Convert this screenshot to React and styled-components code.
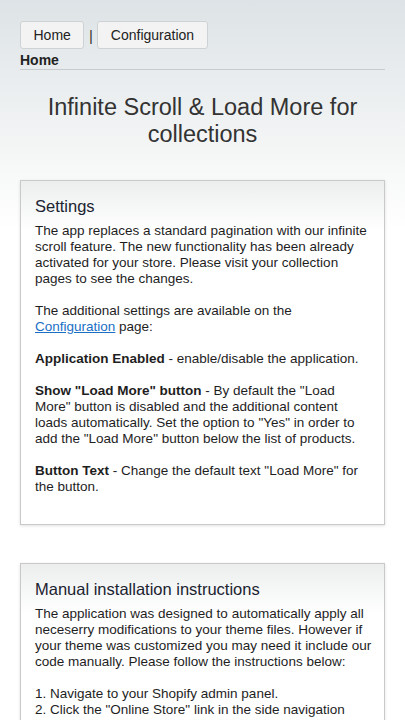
import React from 'react';
import { createGlobalStyle, styled } from 'styled-components';

const GlobalStyle = createGlobalStyle`
  html, body {
    margin: 0;
    padding: 0;
  }
  body {
    min-height: 720px;
    background: linear-gradient(to bottom, #dde3e6 0px, #f7f8f8 170px, #ffffff 230px);
    background-repeat: no-repeat;
    background-color: #fff;
    font-family: "Liberation Sans", Arial, sans-serif;
    color: #1e1e1e;
  }
`;

const App = () => {
  return (
    <>
      <GlobalStyle />
      <Page>
        <Nav>
          <NavButton>Home</NavButton>
          <Separator>|</Separator>
          <NavButton>Configuration</NavButton>
        </Nav>
        <Crumb>Home</Crumb>
        <Title>Infinite Scroll &amp; Load More for collections</Title>

        <Card $top={32}>
          <CardTitle>Settings</CardTitle>
          <Text>
            The app replaces a standard pagination with our infinite scroll
            feature. The new functionality has been already activated for your
            store. Please visit your collection pages to see the changes.
          </Text>
          <Text>
            The additional settings are available on the{' '}
            <Link href="#">Configuration</Link> page:
          </Text>
          <Text>
            <b>Application Enabled</b> - enable/disable the application.
          </Text>
          <Text>
            <b>Show "Load More" button</b> - By default the "Load More" button
            is disabled and the additional content loads automatically. Set the
            option to "Yes" in order to add the "Load More" button below the
            list of products.
          </Text>
          <Text>
            <b>Button Text</b> - Change the default text "Load More" for the
            button.
          </Text>
        </Card>

        <Card $top={38}>
          <CardTitle>Manual installation instructions</CardTitle>
          <Text>
            The application was designed to automatically apply all neceserry
            modifications to your theme files. However if your theme was
            customized you may need it include our code manually. Please follow
            the instructions below:
          </Text>
          <Text>
            1. Navigate to your Shopify admin panel.
            <br />
            2. Click the "Online Store" link in the side navigation
            <br />
            3. Click the "Themes" link and then "Actions" → "Edit code"
          </Text>
        </Card>
      </Page>
    </>
  );
};

export default App;

const Page = styled.div`
  padding: 21px 20px 40px;
`;

const Nav = styled.div`
  display: flex;
  align-items: center;
`;

const NavButton = styled.button`
  height: 28px;
  padding: 0 12.5px;
  font-family: "Liberation Sans", Arial, sans-serif;
  font-size: 14px;
  color: #222;
  background: #f3f3f3;
  border: 1px solid #cfd2d4;
  border-radius: 3px;
`;

const Separator = styled.span`
  width: 13px;
  text-align: center;
  font-size: 15px;
  color: #333;
`;

const Crumb = styled.div`
  padding: 3px 0 1px;
  font-size: 14px;
  font-weight: bold;
  color: #222;
  border-bottom: 1px solid #c7cccf;
`;

const Title = styled.h1`
  margin: 24px 20px 0;
  font-size: 23.5px;
  font-weight: normal;
  line-height: 27px;
  text-align: center;
  color: #333;
`;

const Card = styled.div`
  margin-top: ${({ $top }) => $top}px;
  padding: 14px 11.7px 29px 14px;
  border: 1px solid #c9c9c9;
  background: linear-gradient(to bottom, #eceeee 0px, #ffffff 50px);
  box-shadow: 0 1px 3px rgba(0, 0, 0, 0.12);
`;

const CardTitle = styled.h2`
  margin: 0 0 6px;
  font-size: 16.5px;
  font-weight: normal;
  line-height: 22px;
  color: #1b2330;
`;

const Text = styled.p`
  margin: 0 0 16px;
  font-size: 13.5px;
  line-height: 16px;
  color: #1e1e1e;
  &:last-child {
    margin-bottom: 0;
  }
`;

const Link = styled.a`
  color: #1a6fc5;
  text-decoration: underline;
`;
